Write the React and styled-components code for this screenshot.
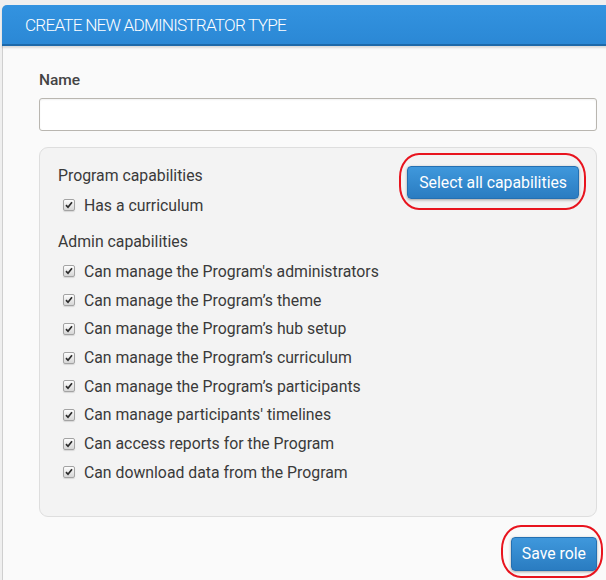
import React from 'react';
import styled, { createGlobalStyle } from 'styled-components';

const GlobalStyle = createGlobalStyle`
  html, body {
    margin: 0;
    padding: 0;
    background: #efefef;
    overflow: hidden;
  }
  body {
    font-family: Roboto, 'Liberation Sans', sans-serif;
    color: #333;
  }
`;

const Page = styled.div`
  padding: 5px 0 0 2px;
  height: 580px;
  box-sizing: border-box;
`;

const Panel = styled.section`
  width: 620px;
  height: 600px;
  background: #fafafa;
  border: 1px solid #cfcfcf;
  border-top: none;
  border-radius: 5px 5px 0 0;
`;

const PanelHeader = styled.header`
  height: 39px;
  display: flex;
  align-items: center;
  padding-left: 23px;
  margin: 0 -1px;
  background: linear-gradient(#3393e0, #2b88d5);
  border-bottom: 2px solid #1e69a9;
  border-radius: 5px 5px 0 0;
  box-shadow: 0 2px 2px rgba(0, 0, 0, 0.12);
  color: #fff;
  font-size: 17.2px;
  font-weight: 300;
  letter-spacing: -0.8px;
`;

const PanelBody = styled.div`
  width: 558px;
  padding: 24px 0 0 36px;
`;

const Label = styled.label`
  display: block;
  font-size: 15.5px;
  font-weight: 500;
  line-height: 20px;
  color: #444;
  margin-bottom: 8px;
`;

const TextInput = styled.input`
  display: block;
  box-sizing: border-box;
  width: 100%;
  height: 33px;
  border: 1px solid #b9b6b0;
  border-radius: 3px;
  background: #fff;
  box-shadow: inset 0 1px 2px rgba(0, 0, 0, 0.06);
`;

const CapBox = styled.div`
  margin-top: 16px;
  padding: 14px 17px 29px 18px;
  background: #f3f3f3;
  border: 1px solid #dedede;
  border-radius: 9px;
`;

const TopRow = styled.div`
  display: flex;
  justify-content: space-between;
  align-items: flex-start;
`;

const Section = styled.div`
  margin-top: ${(p) => p.gap || 0}px;
`;

const Heading = styled.div`
  font-size: 15.8px;
  line-height: 28.7px;
  color: #3a3a3a;
`;

const Row = styled.label`
  display: flex;
  align-items: center;
  gap: 9px;
  padding-left: 5px;
  height: 28.7px;
  font-size: 15.8px;
  color: #3a3a3a;
`;

const Box = styled.span`
  display: inline-flex;
  align-items: center;
  justify-content: center;
  width: 12px;
  height: 12px;
  box-sizing: border-box;
  border: 1px solid #a3a3a3;
  border-radius: 2px;
  background: linear-gradient(#fdfdfd, #d6d6d6);
  box-shadow: 0 1px 1px rgba(0, 0, 0, 0.12);
`;

const Annotated = styled.div`
  position: relative;
  margin-top: ${(p) => p.top || 0}px;

  &::after {
    content: '';
    position: absolute;
    inset: ${(p) => p.inset};
    border: 2.5px solid #e8141e;
    border-radius: 20px / 24px;
    pointer-events: none;
  }
`;

const Button = styled.button`
  height: ${(p) => p.h}px;
  padding: 0 ${(p) => p.px}px;
  border: 1px solid #2470b2;
  border-radius: 4px;
  background: linear-gradient(#3f98dc, #2a7cc1);
  box-shadow: 0 1px 3px rgba(0, 0, 0, 0.35);
  color: #fff;
  font-family: Roboto, 'Liberation Sans', sans-serif;
  font-size: 15.8px;
  cursor: pointer;
`;

const Footer = styled.div`
  display: flex;
  justify-content: flex-end;
  margin-top: 20px;
`;

const Check = () => (
  <Box>
    <svg width="8" height="8" viewBox="0 0 8 8">
      <path d="M1 4.2 L3 6.3 L7 1.3" fill="none" stroke="#2b2b2b" strokeWidth="1.7" />
    </svg>
  </Box>
);

const adminCaps = [
  "Can manage the Program's administrators",
  'Can manage the Program\u2019s theme',
  'Can manage the Program\u2019s hub setup',
  'Can manage the Program\u2019s curriculum',
  'Can manage the Program\u2019s participants',
  "Can manage participants' timelines",
  'Can access reports for the Program',
  'Can download data from the Program',
];

export default function App() {
  return (
    <Page>
      <GlobalStyle />
      <Panel>
        <PanelHeader>CREATE NEW ADMINISTRATOR TYPE</PanelHeader>
        <PanelBody>
          <Label htmlFor="name">Name</Label>
          <TextInput id="name" type="text" />
          <CapBox>
            <TopRow>
              <Section>
                <Heading>Program capabilities</Heading>
                <Row>
                  <Check />
                  Has a curriculum
                </Row>
              </Section>
              <Annotated top={4} inset="-13px -7px -11px -8px">
                <Button h={33} px={11}>Select all capabilities</Button>
              </Annotated>
            </TopRow>
            <Section gap={9}>
              <Heading>Admin capabilities</Heading>
              {adminCaps.map((cap) => (
                <Row key={cap}>
                  <Check />
                  {cap}
                </Row>
              ))}
            </Section>
          </CapBox>
          <Footer>
            <Annotated inset="-12px -6px -7px -10px">
              <Button h={34} px={10}>Save role</Button>
            </Annotated>
          </Footer>
        </PanelBody>
      </Panel>
    </Page>
  );
}
